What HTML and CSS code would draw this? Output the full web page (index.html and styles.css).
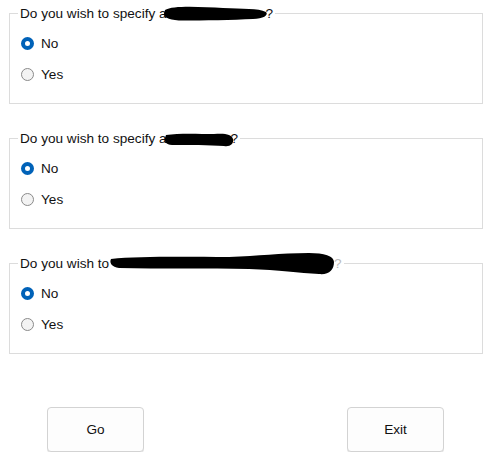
FILE: index.html
```html
<!DOCTYPE html>
<html>
<head>
<meta charset="utf-8">
<link rel="stylesheet" href="styles.css">
</head>
<body>
<div class="page">
  <fieldset class="group">
    <legend class="legend">Do you wish to specify a<svg class="blob blob1" width="106" height="16" viewBox="0 0 106 16"><path d="M2,5 C10,0 40,2 60,3 C80,4 95,3 103,7 C106,10 100,14 90,14 C70,15 40,15.5 20,15.5 C8,15.5 1,13 1,9 Z"/></svg><span class="q">?</span></legend>
    <label class="row"><span class="radio checked"></span><span>No</span></label>
    <label class="row"><span class="radio"></span><span>Yes</span></label>
  </fieldset>
  <fieldset class="group">
    <legend class="legend">Do you wish to specify a<svg class="blob blob2" width="70" height="15" viewBox="0 0 70 15"><path d="M2,3 C15,1 35,2 50,2 C60,1 68,2 69,7 C70,12 66,15 60,14 C45,13 25,13 8,13 C2,13 0,9 1,6 Z"/></svg><span class="q">?</span></legend>
    <label class="row"><span class="radio checked"></span><span>No</span></label>
    <label class="row"><span class="radio"></span><span>Yes</span></label>
  </fieldset>
  <fieldset class="group">
    <legend class="legend">Do you wish to <svg class="blob blob3" width="226" height="24" viewBox="0 0 226 24"><path d="M2,7 C30,4 80,5 120,5 C150,4 170,1 200,1 C215,1 225,4 225,10 C225,18 220,23 210,22 C190,21 170,18 140,17 C100,16 50,17 10,16 C3,15 0,11 2,7 Z"/></svg><span class="q faint">?</span></legend>
    <label class="row"><span class="radio checked"></span><span>No</span></label>
    <label class="row"><span class="radio"></span><span>Yes</span></label>
  </fieldset>
  <div class="buttons">
    <button class="btn">Go</button>
    <button class="btn">Exit</button>
  </div>
</div>
</body>
</html>
```
FILE: styles.css
```css
html, body {
  margin: 0;
  padding: 0;
  background: #ffffff;
}
body {
  font-family: "Liberation Sans", Arial, sans-serif;
  font-size: 13.6px;
  color: #111;
}
.page {
  padding: 6px 8px 0 9px;
  display: flex;
  flex-direction: column;
  gap: 27px;
}
.group {
  margin: 0;
  border: 1px solid #dcdcdc;
  padding: 7px 8px 13px 8px;
  min-width: 0;
}
.legend {
  padding: 0 2px;
  height: 15px;
  line-height: 15px;
  white-space: nowrap;
}
.blob {
  display: inline-block;
  fill: #000;
  margin-top: -14px;
  margin-bottom: -14px;
}
.blob1 { vertical-align: 11px; margin-left: -4px; }
.blob2 { vertical-align: 10px; margin-left: -3px; }
.blob3 { vertical-align: 6px; margin-left: -4px; }
.q { margin-left: -3px; }
.q.faint { color: #bbb; margin-left: -1px; }
.row {
  display: flex;
  align-items: center;
  height: 31px;
  padding-left: 3px;
  gap: 7px;
}
.radio {
  width: 13px;
  height: 13px;
  box-sizing: border-box;
  border-radius: 50%;
  border: 1px solid #8a8a8a;
  background: #f3f3f3;
  flex: none;
}
.radio.checked {
  border: 4px solid #0062b8;
  background: #ffffff;
}
.buttons {
  display: flex;
  gap: 203px;
  padding-left: 38px;
  margin-top: 26px;
}
.btn {
  width: 97px;
  height: 45px;
  box-sizing: border-box;
  border: 1px solid #d3d3d3;
  border-radius: 4px;
  background: #fdfdfd;
  font-family: "Liberation Sans", Arial, sans-serif;
  font-size: 13.6px;
  color: #111;
  padding: 0;
  box-shadow: 0 1px 0 #e6e6e6;
}
```
